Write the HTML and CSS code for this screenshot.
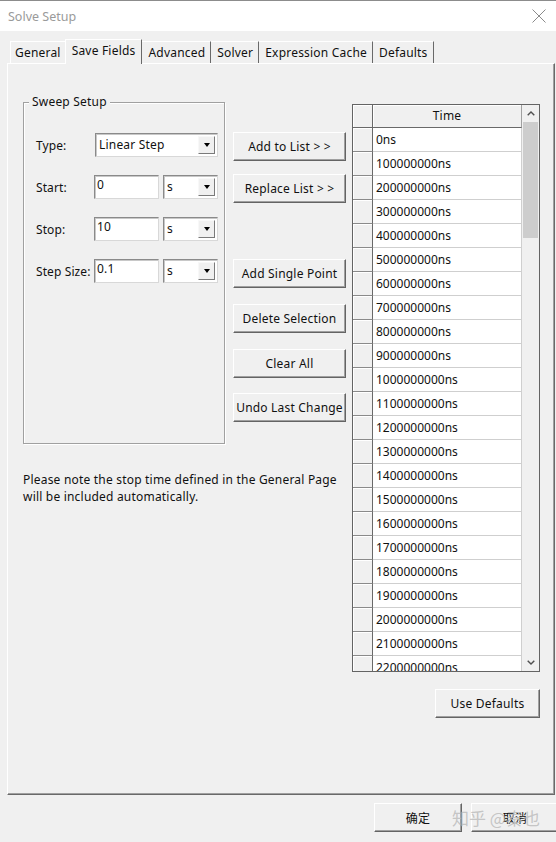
FILE: index.html
```html
<!DOCTYPE html>
<html>
<head>
<meta charset="utf-8">
<title>Solve Setup</title>
<link rel="stylesheet" href="styles.css">
</head>
<body>
<div class="window">
  <div class="titlebar">
    <span class="title">Solve Setup</span>
    <svg class="close" viewBox="0 0 14 14" width="14" height="14"><path d="M0.5 0.5 L13.5 13.5 M13.5 0.5 L0.5 13.5" stroke="#8a8a8a" stroke-width="1" fill="none"/></svg>
  </div>
  <div class="tabs">
    <div class="tab first">General</div>
    <div class="tab active">Save Fields</div>
    <div class="tab">Advanced</div>
    <div class="tab">Solver</div>
    <div class="tab">Expression Cache</div>
    <div class="tab">Defaults</div>
  </div>
  <div class="panel">
    <div class="cols">
      <div class="leftcol">
        <div class="group">
          <span class="legend">Sweep Setup</span>
          <div class="frow">
            <span class="lbl">Type:</span>
            <div class="combo type"><span class="val">Linear Step</span><span class="drop"><i class="tri"></i></span></div>
          </div>
          <div class="frow">
            <span class="lbl">Start:</span>
            <div class="edit">0</div>
            <div class="combo unit"><span class="val">s</span><span class="drop"><i class="tri"></i></span></div>
          </div>
          <div class="frow">
            <span class="lbl">Stop:</span>
            <div class="edit">10</div>
            <div class="combo unit"><span class="val">s</span><span class="drop"><i class="tri"></i></span></div>
          </div>
          <div class="frow">
            <span class="lbl">Step Size:</span>
            <div class="edit">0.1</div>
            <div class="combo unit"><span class="val">s</span><span class="drop"><i class="tri"></i></span></div>
          </div>
        </div>
        <p class="note">Please note the stop time defined in the General Page<br>will be included automatically.</p>
      </div>
      <div class="btncol">
        <div class="btn">Add to List &gt; &gt;</div>
        <div class="btn b-replace">Replace List &gt; &gt;</div>
        <div class="btn b-single">Add Single Point</div>
        <div class="btn b-next">Delete Selection</div>
        <div class="btn b-next">Clear All</div>
        <div class="btn b-undo">Undo Last Change</div>
      </div>
      <div class="gridcol">
        <div class="grid">
          <div class="gtable">
            <div class="grow ghead"><div class="rh"></div><div class="hcell">Time</div></div>
            <div class="grow"><div class="rh"></div><div class="dcell">0ns</div></div>
            <div class="grow"><div class="rh"></div><div class="dcell">100000000ns</div></div>
            <div class="grow"><div class="rh"></div><div class="dcell">200000000ns</div></div>
            <div class="grow"><div class="rh"></div><div class="dcell">300000000ns</div></div>
            <div class="grow"><div class="rh"></div><div class="dcell">400000000ns</div></div>
            <div class="grow"><div class="rh"></div><div class="dcell">500000000ns</div></div>
            <div class="grow"><div class="rh"></div><div class="dcell">600000000ns</div></div>
            <div class="grow"><div class="rh"></div><div class="dcell">700000000ns</div></div>
            <div class="grow"><div class="rh"></div><div class="dcell">800000000ns</div></div>
            <div class="grow"><div class="rh"></div><div class="dcell">900000000ns</div></div>
            <div class="grow"><div class="rh"></div><div class="dcell">1000000000ns</div></div>
            <div class="grow"><div class="rh"></div><div class="dcell">1100000000ns</div></div>
            <div class="grow"><div class="rh"></div><div class="dcell">1200000000ns</div></div>
            <div class="grow"><div class="rh"></div><div class="dcell">1300000000ns</div></div>
            <div class="grow"><div class="rh"></div><div class="dcell">1400000000ns</div></div>
            <div class="grow"><div class="rh"></div><div class="dcell">1500000000ns</div></div>
            <div class="grow"><div class="rh"></div><div class="dcell">1600000000ns</div></div>
            <div class="grow"><div class="rh"></div><div class="dcell">1700000000ns</div></div>
            <div class="grow"><div class="rh"></div><div class="dcell">1800000000ns</div></div>
            <div class="grow"><div class="rh"></div><div class="dcell">1900000000ns</div></div>
            <div class="grow"><div class="rh"></div><div class="dcell">2000000000ns</div></div>
            <div class="grow"><div class="rh"></div><div class="dcell">2100000000ns</div></div>
            <div class="grow"><div class="rh"></div><div class="dcell">2200000000ns</div></div>
          </div>
          <div class="vscroll">
            <div class="sbtn"><svg viewBox="0 0 8 5" width="8" height="5"><path d="M0.7 4.3 L4 1 L7.3 4.3" stroke="#505050" stroke-width="1.4" fill="none"/></svg></div>
            <div class="thumb"></div>
            <div class="strack"></div>
            <div class="sbtn"><svg viewBox="0 0 8 5" width="8" height="5"><path d="M0.7 0.7 L4 4 L7.3 0.7" stroke="#505050" stroke-width="1.4" fill="none"/></svg></div>
          </div>
        </div>
        <div class="btn usedef">Use Defaults</div>
      </div>
    </div>
  </div>
  <div class="footer">
    <div class="btn fbtn">确定</div>
    <div class="btn fbtn">取消</div>
  </div>
  <div class="watermark">知乎 @秦也</div>
</div>
</body>
</html>
```
FILE: styles.css
```css
* { box-sizing: border-box; }
html, body { margin: 0; padding: 0; }
body {
  width: 556px;
  height: 842px;
  overflow: hidden;
  background: #f0f0f0;
  font-family: "Noto Sans", "DejaVu Sans", sans-serif;
  font-size: 12px;
  letter-spacing: 0.2px;
  color: #111;
}
.window { position: relative; width: 556px; height: 842px; overflow: hidden; }

.titlebar {
  height: 31px;
  background: #fff;
  border-top: 1px solid #8c8c8c;
  display: flex;
  align-items: center;
  justify-content: space-between;
  padding: 0 10px 0 8px;
}
.title { color: #9a9a9a; font-size: 12.5px; letter-spacing: 0; }
.close { display: block; }

.tabs {
  display: flex;
  align-items: flex-end;
  height: 24px;
  margin-top: 8px;
  padding-left: 10px;
  position: relative;
  z-index: 2;
}
.tab {
  height: 22px;
  line-height: 21px;
  padding: 0 5px 0 6px;
  border-top: 1px solid #fff;
  border-right: 1px solid #696969;
  white-space: nowrap;
}
.tab.first { border-left: 1px solid #fff; border-right: none; padding: 0 4px 0 4px; }
.tab.active {
  height: 25px;
  margin-bottom: -1px;
  padding: 0 6px 0 6px;
  line-height: 22px;
  background: #f0f0f0;
  border-left: 1px solid #fff;
  border-right: 1px solid #696969;
}

.panel {
  margin-left: 7px;
  width: 548px;
  height: 732px;
  border-top: 1px solid #fff;
  border-left: 1px solid #fff;
  border-right: 1px solid #696969;
  border-bottom: 1px solid #696969;
  box-shadow: inset -1px -1px 0 #a0a0a0;
  padding: 38px 0 0 15px;
}
.cols { display: flex; align-items: flex-start; }

.leftcol { width: 202px; flex: none; }
.group {
  position: relative;
  height: 342px;
  border: 1px solid #a0a0a0;
  box-shadow: inset 1px 1px 0 #fff, 1px 1px 0 #fff;
  padding: 30px 0 0 12px;
}
.legend {
  position: absolute;
  top: -9px;
  left: 5px;
  padding: 0 3px;
  background: #f0f0f0;
  line-height: 16px;
}
.frow { display: flex; align-items: center; height: 24px; }
.frow + .frow { margin-top: 18px; }
.lbl { width: 58px; flex: none; white-space: nowrap; letter-spacing: 0.1px; }

.combo, .edit {
  height: 24px;
  background: #fff;
  border: 1px solid;
  border-color: #8a8a8a #d8d8d8 #d8d8d8 #8a8a8a;
  box-shadow: inset 1px 1px 0 #c8c8c8;
}
.combo { display: flex; align-items: stretch; }
.combo.type { width: 123px; margin-left: 1px; }
.combo.unit { width: 55px; margin-left: 4px; }
.val { flex: 1; padding: 2px 0 0 3px; line-height: 18px; }
.edit { width: 65px; padding: 0 0 0 2px; line-height: 18px; }
.drop {
  width: 17px;
  flex: none;
  margin: 2px 2px 2px 0;
  background: #f0f0f0;
  border: 1px solid;
  border-color: #f8f8f8 #7a7a7a #7a7a7a #f8f8f8;
  display: flex;
  align-items: center;
  justify-content: center;
}
.tri {
  width: 0;
  height: 0;
  border-left: 3.5px solid transparent;
  border-right: 3.5px solid transparent;
  border-top: 4px solid #000;
}

.note {
  margin: 27px 0 0 0;
  line-height: 17px;
  white-space: nowrap;
}

.btncol {
  width: 113px;
  flex: none;
  margin-left: 8px;
  padding-top: 30px;
  display: flex;
  flex-direction: column;
}
.btn {
  height: 29px;
  display: flex;
  align-items: center;
  justify-content: center;
  white-space: nowrap;
  background: #f0f0f0;
  border: 1px solid;
  border-color: #fff #646464 #646464 #fff;
  box-shadow: inset -1px -1px 0 #a0a0a0;
}
.b-replace { margin-top: 13px; }
.b-single { margin-top: 56px; }
.b-next { margin-top: 16px; }
.b-undo { margin-top: 15px; }

.gridcol {
  width: 188px;
  flex: none;
  margin-left: 6px;
  margin-top: 2px;
  display: flex;
  flex-direction: column;
}
.grid {
  height: 568px;
  border: 1px solid #646464;
  display: flex;
  overflow: hidden;
  background: #fff;
}
.gtable { width: 169px; flex: none; overflow: hidden; }
.grow { display: flex; height: 24px; }
.grow.ghead { height: 23px; }
.rh {
  width: 20px;
  flex: none;
  background: #f0f0f0;
  border-right: 1px solid #696969;
  border-bottom: 1px solid #8a8a8a;
  box-shadow: inset 1px 1px 0 #fff;
}
.ghead .rh { border-bottom-color: #696969; }
.hcell {
  flex: 1;
  background: #f0f0f0;
  border-bottom: 1px solid #696969;
  border-right: 1px solid #a0a0a0;
  box-shadow: inset 1px 1px 0 #fff;
  text-align: center;
  line-height: 22px;
}
.dcell {
  flex: 1;
  background: #fff;
  border-bottom: 1px solid #cfcfcf;
  border-right: 1px solid #cfcfcf;
  padding-left: 3px;
  line-height: 23px;
  white-space: nowrap;
  letter-spacing: 0;
}

.vscroll {
  width: 17px;
  flex: none;
  background: #f0f0f0;
  display: flex;
  flex-direction: column;
}
.sbtn {
  height: 17px;
  flex: none;
  display: flex;
  align-items: center;
  justify-content: center;
}
.thumb { height: 116px; flex: none; margin: 0 1px; background: #cdcdcd; }
.strack { flex: 1; }

.usedef { width: 105px; margin-top: 17px; align-self: flex-end; }

.footer {
  display: flex;
  gap: 9px;
  padding-left: 374px;
  margin-top: 8px;
}
.fbtn { width: 88px; flex: none; font-family: "Noto Sans CJK SC", sans-serif; }

.watermark {
  position: absolute;
  left: 452px;
  top: 805px;
  font-family: "Noto Sans CJK SC", sans-serif;
  font-size: 17px;
  letter-spacing: 0;
  color: rgba(185, 185, 185, 0.8);
  white-space: nowrap;
}
```
